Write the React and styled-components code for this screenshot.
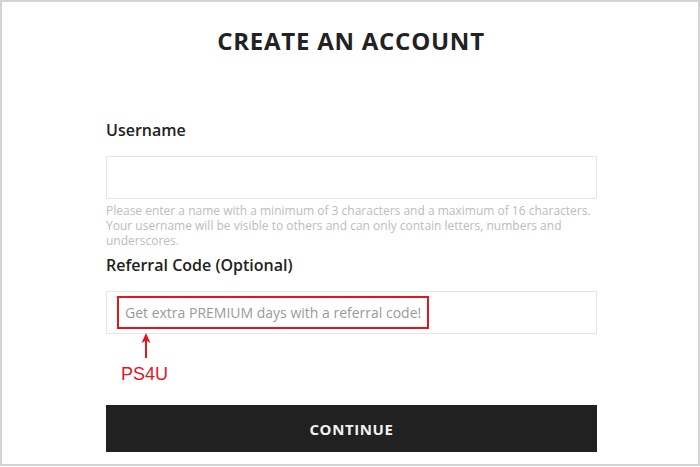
import React from 'react'
import styled, {createGlobalStyle} from 'styled-components'

const Global = createGlobalStyle`
  html, body {
    margin: 0;
    padding: 0;
    background: #fff;
  }
  body {
    font-family: "Open Sans", "Liberation Sans", sans-serif;
  }
`

const Frame = styled.div`
  box-sizing: border-box;
  width: 700px;
  height: 466px;
  border: 2px solid #d3d3d3;
  padding-top: 23px;
  overflow: hidden;
`

const Title = styled.h1`
  margin: 0 0 63px;
  padding-left: 2px;
  text-align: center;
  font-size: 24px;
  line-height: 32px;
  font-weight: 700;
  letter-spacing: 0.75px;
  color: #222;
`

const Form = styled.form`
  width: 491px;
  margin-left: 104px;
  display: flex;
  flex-direction: column;
`

const Label = styled.label`
  display: block;
  font-size: 16px;
  line-height: 20px;
  font-weight: 600;
  color: #222;
  margin-top: ${p => p.$top || 0}px;
  margin-bottom: 16px;
`

const Field = styled.div`
  position: relative;
  box-sizing: border-box;
  height: 43px;
  border: 1px solid #e6e6e6;
  padding: 4px 0 0 10px;
`

const Help = styled.p`
  margin: 4px 0 0;
  font-size: 12px;
  line-height: 15px;
  color: #bcbcbc;
`

const Placeholder = styled.span`
  display: inline-block;
  box-sizing: border-box;
  height: 33px;
  border: 2px solid #e3151d;
  padding: 0 6px;
  font-size: 14px;
  line-height: 29px;
  color: #9a9a9a;
`

const Note = styled.div`
  position: absolute;
  left: 14px;
  top: 40px;
  display: flex;
  flex-direction: column;
  align-items: center;
  width: 50px;
  color: #e3151d;
`

const NoteText = styled.span`
  margin-top: 6px;
  margin-left: -3px;
  font-family: "Liberation Sans", Arial, sans-serif;
  font-size: 18px;
  line-height: 20px;
`

const Button = styled.button`
  margin-top: 71px;
  height: 47px;
  border: 0;
  background: #212121;
  color: #f2f2f2;
  font-family: "Open Sans", "Liberation Sans", sans-serif;
  font-size: 15px;
  font-weight: 700;
  letter-spacing: 0.6px;
  cursor: pointer;
`

const Arrow = () => (
  <svg width="12" height="26" viewBox="0 0 12 26">
    <path d="M6 1 L1.5 11 L6 8.5 L10.5 11 Z" fill="#e3151d" />
    <line x1="6" y1="8" x2="6" y2="26" stroke="#e3151d" strokeWidth="2" />
  </svg>
)

const App = () => {
  return (
    <>
      <Global />
      <Frame>
        <Title>CREATE AN ACCOUNT</Title>
        <Form onSubmit={e => e.preventDefault()}>
          <Label>Username</Label>
          <Field />
          <Help>
            Please enter a name with a minimum of 3 characters and a maximum of 16 characters.
            Your username will be visible to others and can only contain letters, numbers and
            underscores.
          </Help>
          <Label $top={7}>Referral Code (Optional)</Label>
          <Field>
            <Placeholder>Get extra PREMIUM days with a referral code!</Placeholder>
            <Note>
              <Arrow />
              <NoteText>PS4U</NoteText>
            </Note>
          </Field>
          <Button type="submit">CONTINUE</Button>
        </Form>
      </Frame>
    </>
  )
}

export default App
